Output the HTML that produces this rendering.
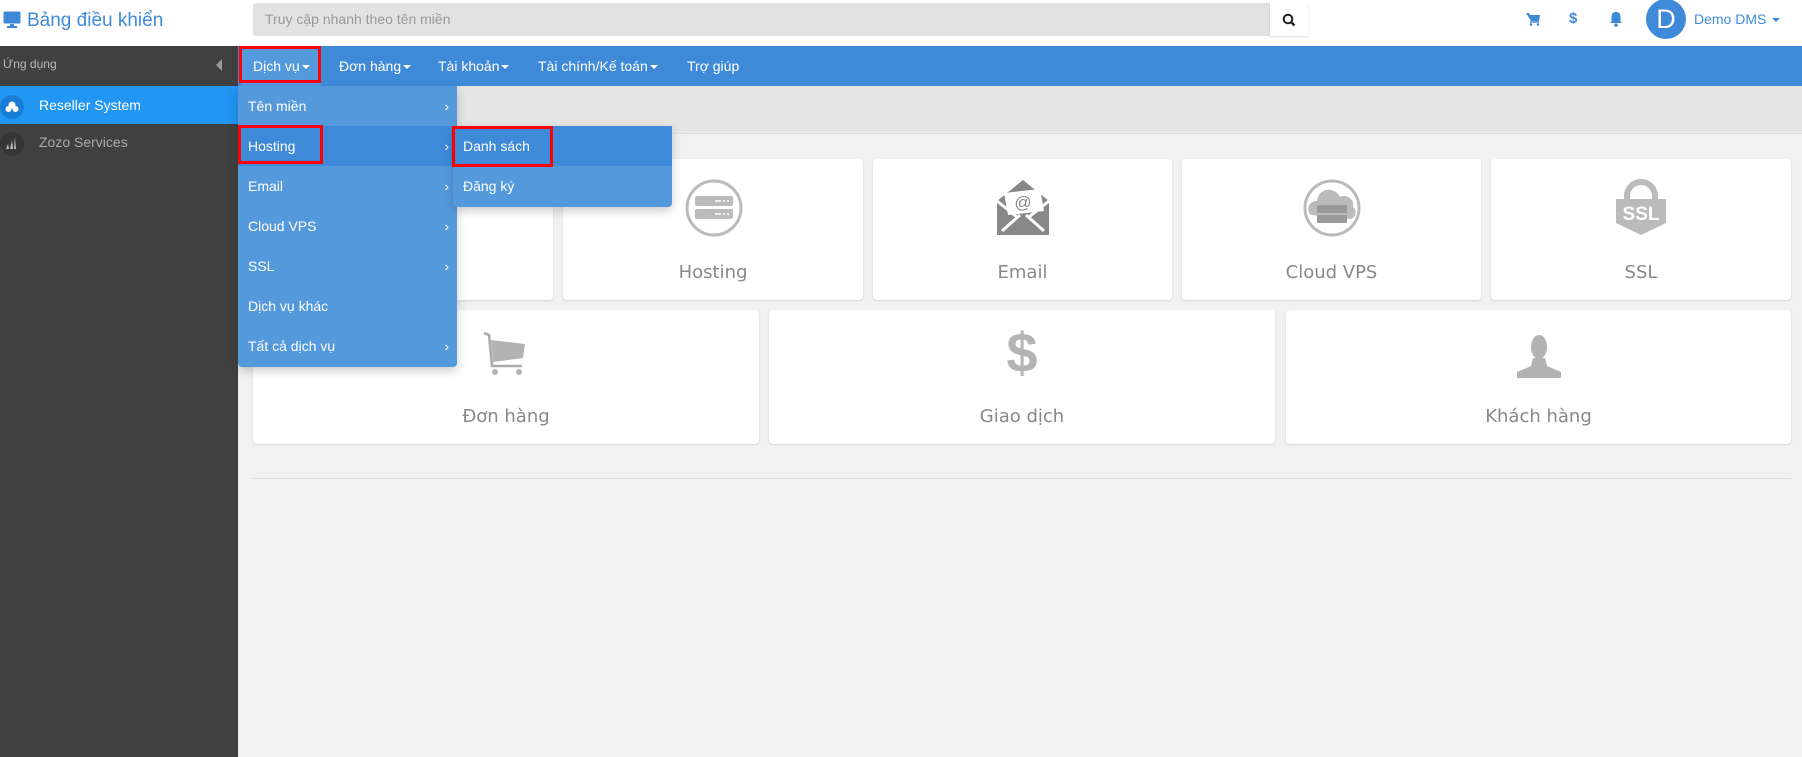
<!DOCTYPE html>
<html><head><meta charset="utf-8">
<style>
*{box-sizing:border-box;margin:0;padding:0}
body{width:1802px;height:757px;overflow:hidden;font-family:"Liberation Sans",sans-serif;background:#f1f1f1;position:relative}
.abs{position:absolute}
#top{left:0;top:0;width:1802px;height:46px;background:#fff}
#nav{left:238px;top:46px;width:1564px;height:40px;background:#3f8ad8}
#side{left:0;top:46px;width:238px;height:711px;background:#404040}
.card{position:absolute;background:#fff;border-radius:4px;box-shadow:0 1px 2px rgba(0,0,0,.12);text-align:center}
.card .lbl{position:absolute;left:0;right:0;font-family:"DejaVu Sans","Liberation Sans",sans-serif;font-size:18px;color:#888}
.navi{position:absolute;top:46px;height:40px;line-height:40px;color:#fff;font-size:14px}
.caret{display:inline-block;width:0;height:0;border-left:4px solid transparent;border-right:4px solid transparent;border-top:4px solid #fff;vertical-align:middle;margin-left:2px}
.dd{position:absolute;background:#5599dd;border-radius:0 0 4px 4px;box-shadow:0 4px 10px rgba(0,0,0,.2)}
.it{height:40px;line-height:40px;color:#fff;font-size:14px;padding-left:10px;position:relative}
.it .ch{position:absolute;right:8px;top:0;font-size:14px}
.red{position:absolute;border:3px solid #f00}
</style></head><body>
<div id="top" class="abs">
  <svg class="abs" style="left:3px;top:11px" width="18" height="17" viewBox="0 0 18 17"><rect x="0.5" y="0.5" width="17" height="12" rx="1" fill="#3f8ad8"/><rect x="2" y="2" width="14" height="9" fill="#3f8ad8"/><rect x="7" y="13" width="4" height="2" fill="#3f8ad8"/><rect x="4" y="15" width="10" height="2" fill="#3f8ad8"/></svg>
  <div class="abs" style="left:27px;top:10px;font-size:19px;color:#3f8ad8">Bảng điều khiển</div>
  <div class="abs" style="left:253px;top:3px;width:1017px;height:33px;background:#e2e2e2;border-radius:3px 0 0 3px"></div>
  <div class="abs" style="left:265px;top:11px;font-size:14px;color:#999">Truy cập nhanh theo tên miền</div>
  <div class="abs" style="left:1270px;top:3px;width:38px;height:33px;background:#fff;box-shadow:0 1px 2px rgba(0,0,0,.15)"></div>
  <svg class="abs" style="left:1282px;top:13px" width="14" height="14" viewBox="0 0 14 14"><circle cx="6" cy="6" r="4.3" fill="none" stroke="#222" stroke-width="2"/><path d="M9 9l3.5 3.5" stroke="#222" stroke-width="2.4"/></svg>
  <svg class="abs" style="left:1526px;top:12px" width="15" height="14" viewBox="0 0 15 14"><path d="M0 1h3l1 2h10l-1 6H5z" fill="#3f8ad8"/><path d="M4 10h9" stroke="#3f8ad8" stroke-width="1.5"/><circle cx="5" cy="12.5" r="1.3" fill="#3f8ad8"/><circle cx="12" cy="12.5" r="1.3" fill="#3f8ad8"/></svg>
  <div class="abs" style="left:1569px;top:10px;font-size:15px;font-weight:bold;color:#3f8ad8">$</div>
  <svg class="abs" style="left:1609px;top:11px" width="14" height="16" viewBox="0 0 14 16"><path d="M7 1c-3 0-4.5 2-4.5 5v4L1 12h12l-1.5-2V6C11.5 3 10 1 7 1z" fill="#3f8ad8"/><circle cx="7" cy="14" r="1.8" fill="#3f8ad8"/></svg>
  <div class="abs" style="left:1646px;top:-1px;width:40px;height:40px;border-radius:50%;background:#3f8ad8;color:#fff;font-size:27px;text-align:center;line-height:40px">D</div>
  <div class="abs" style="left:1694px;top:11px;font-size:14px;color:#3f8ad8">Demo DMS <span class="caret" style="border-top-color:#3f8ad8"></span></div>
</div>
<div id="side" class="abs">
  <div class="abs" style="left:3px;top:11px;font-size:12px;color:#bbb">Ứng dụng</div>
  <div class="abs" style="left:216px;top:13px;width:0;height:0;border-top:6px solid transparent;border-bottom:6px solid transparent;border-right:6px solid #999"></div>
  <div class="abs" style="left:0;top:40px;width:238px;height:38px;background:#2196f3"></div>
  <div class="abs" style="left:0;top:49px;width:24px;height:24px;border-radius:50%;background:#1a7ed6"></div>
  <svg class="abs" style="left:5px;top:55px" width="14" height="12" viewBox="0 0 14 12"><circle cx="7" cy="4" r="3.5" fill="#fff"/><circle cx="3.5" cy="8" r="3" fill="#fff"/><circle cx="10.5" cy="8" r="3" fill="#fff"/></svg>
  <div class="abs" style="left:39px;top:51px;font-size:14px;color:#fff">Reseller System</div>
  <div class="abs" style="left:0;top:86px;width:24px;height:24px;border-radius:50%;background:#363636"></div>
  <svg class="abs" style="left:5px;top:90px" width="12" height="14" viewBox="0 0 12 14"><path d="M1 13l2-5 1 5zM5 13l2-9 1 9zM9 13l1-12 1 12z" fill="#bbb"/></svg>
  <div class="abs" style="left:39px;top:88px;font-size:14px;color:#aaa">Zozo Services</div>
</div>
<div id="nav" class="abs"></div>
<div class="abs" style="left:241px;top:46px;width:80px;height:40px;background:#5599dd"></div>
<div class="navi" style="left:253px">Dịch vụ<span class="caret"></span></div>
<div class="navi" style="left:339px">Đơn hàng<span class="caret"></span></div>
<div class="navi" style="left:438px">Tài khoản<span class="caret"></span></div>
<div class="navi" style="left:538px">Tài chính/Kế toán<span class="caret"></span></div>
<div class="navi" style="left:687px">Trợ giúp</div>
<div class="abs" style="left:238px;top:86px;width:1564px;height:48px;background:#e5e5e5;border-bottom:1px solid #ddd"></div>

<div class="card" style="left:253px;top:159px;width:300px;height:141px"></div>
<div class="card" style="left:563px;top:159px;width:300px;height:141px">
  <svg class="abs" style="left:122px;top:20px" width="58" height="58" viewBox="0 0 58 58"><circle cx="29" cy="29" r="27" fill="none" stroke="#bbb" stroke-width="3"/><rect x="10" y="17" width="38" height="10" rx="2" fill="#bbb"/><rect x="10" y="30" width="38" height="10" rx="2" fill="#bbb"/><path d="M30 22h6M38 22h2M42 22h2M30 35h6M38 35h2M42 35h2" stroke="#fff" stroke-width="1.5"/></svg>
  <div class="lbl" style="top:103px">Hosting</div></div>
<div class="card" style="left:873px;top:159px;width:299px;height:141px">
  <svg class="abs" style="left:121px;top:20px" width="58" height="58" viewBox="0 0 58 58"><path d="M3 22L29 1l26 21v34H3z" fill="#888"/><path d="M10 14l36-4 4 22-36 4z" fill="#fff"/><text x="29" y="29" font-size="17" text-anchor="middle" fill="#888" font-family="Liberation Sans">@</text><path d="M3 22l20 16M55 22L35 38M8 52l18-16M50 52L32 36" stroke="#fff" stroke-width="3"/></svg>
  <div class="lbl" style="top:103px">Email</div></div>
<div class="card" style="left:1182px;top:159px;width:299px;height:141px">
  <svg class="abs" style="left:121px;top:20px" width="58" height="58" viewBox="0 0 58 58"><circle cx="29" cy="29" r="27" fill="none" stroke="#bbb" stroke-width="3"/><path d="M8 36a8 8 0 0 1 6-14 12 12 0 0 1 23-4 9 9 0 0 1 13 10 7 7 0 0 1-2 12z" fill="#bbb"/><rect x="14" y="26" width="30" height="8" rx="1" fill="#999"/><rect x="14" y="36" width="30" height="8" rx="1" fill="#999"/></svg>
  <div class="lbl" style="top:103px">Cloud VPS</div></div>
<div class="card" style="left:1491px;top:159px;width:300px;height:141px">
  <svg class="abs" style="left:121px;top:18px" width="58" height="60" viewBox="0 0 58 60"><path d="M15 24V19a14 14 0 0 1 28 0v5" fill="none" stroke="#bbb" stroke-width="6"/><path d="M4 22h50v24L29 58 4 46z" fill="#bbb"/><text x="29" y="43" font-size="19" font-weight="bold" text-anchor="middle" fill="#fff" font-family="Liberation Sans">SSL</text></svg>
  <div class="lbl" style="top:103px">SSL</div></div>

<div class="card" style="left:253px;top:310px;width:506px;height:134px">
  <svg class="abs" style="left:230px;top:22px" width="44" height="44" viewBox="0 0 44 44"><path d="M1 1l5 2 3 31h30" fill="none" stroke="#aaa" stroke-width="2.5"/><path d="M8 8l34 4-2 14-30 4z" fill="#b3b3b3"/><circle cx="12" cy="40" r="3" fill="#b3b3b3"/><circle cx="36" cy="40" r="3" fill="#b3b3b3"/></svg>
  <div class="lbl" style="top:96px">Đơn hàng</div></div>
<div class="card" style="left:769px;top:310px;width:506px;height:134px">
  <div class="abs" style="left:0;right:0;top:10px;font-size:56px;font-weight:bold;color:#b3b3b3;font-family:'Liberation Sans',sans-serif">$</div>
  <div class="lbl" style="top:96px">Giao dịch</div></div>
<div class="card" style="left:1286px;top:310px;width:505px;height:134px">
  <svg class="abs" style="left:231px;top:24px" width="44" height="44" viewBox="0 0 44 44"><ellipse cx="22" cy="13" rx="8" ry="12" fill="#b3b3b3"/><path d="M16 24l-2 8L0 38v6h44v-6l-14-6-2-8z" fill="#b3b3b3"/></svg>
  <div class="lbl" style="top:96px">Khách hàng</div></div>

<div class="abs" style="left:253px;top:478px;width:1538px;height:1px;background:#ddd"></div>

<div class="dd" style="left:238px;top:86px;width:219px;height:281px">
  <div class="it">Tên miền<span class="ch">›</span></div>
  <div class="it" style="background:#3f8ad8">Hosting<span class="ch">›</span></div>
  <div class="it">Email<span class="ch">›</span></div>
  <div class="it">Cloud VPS<span class="ch">›</span></div>
  <div class="it">SSL<span class="ch">›</span></div>
  <div class="it">Dịch vụ khác</div>
  <div class="it">Tất cả dịch vụ<span class="ch">›</span></div>
</div>
<div class="dd" style="left:453px;top:126px;width:219px;height:81px;border-radius:0 0 4px 4px">
  <div class="it" style="background:#3f8ad8">Danh sách</div>
  <div class="it">Đăng ký</div>
</div>
<div class="red" style="left:239px;top:46px;width:82px;height:37px"></div>
<div class="red" style="left:238px;top:125px;width:85px;height:39px"></div>
<div class="red" style="left:452px;top:126px;width:101px;height:41px"></div>
</body></html>
